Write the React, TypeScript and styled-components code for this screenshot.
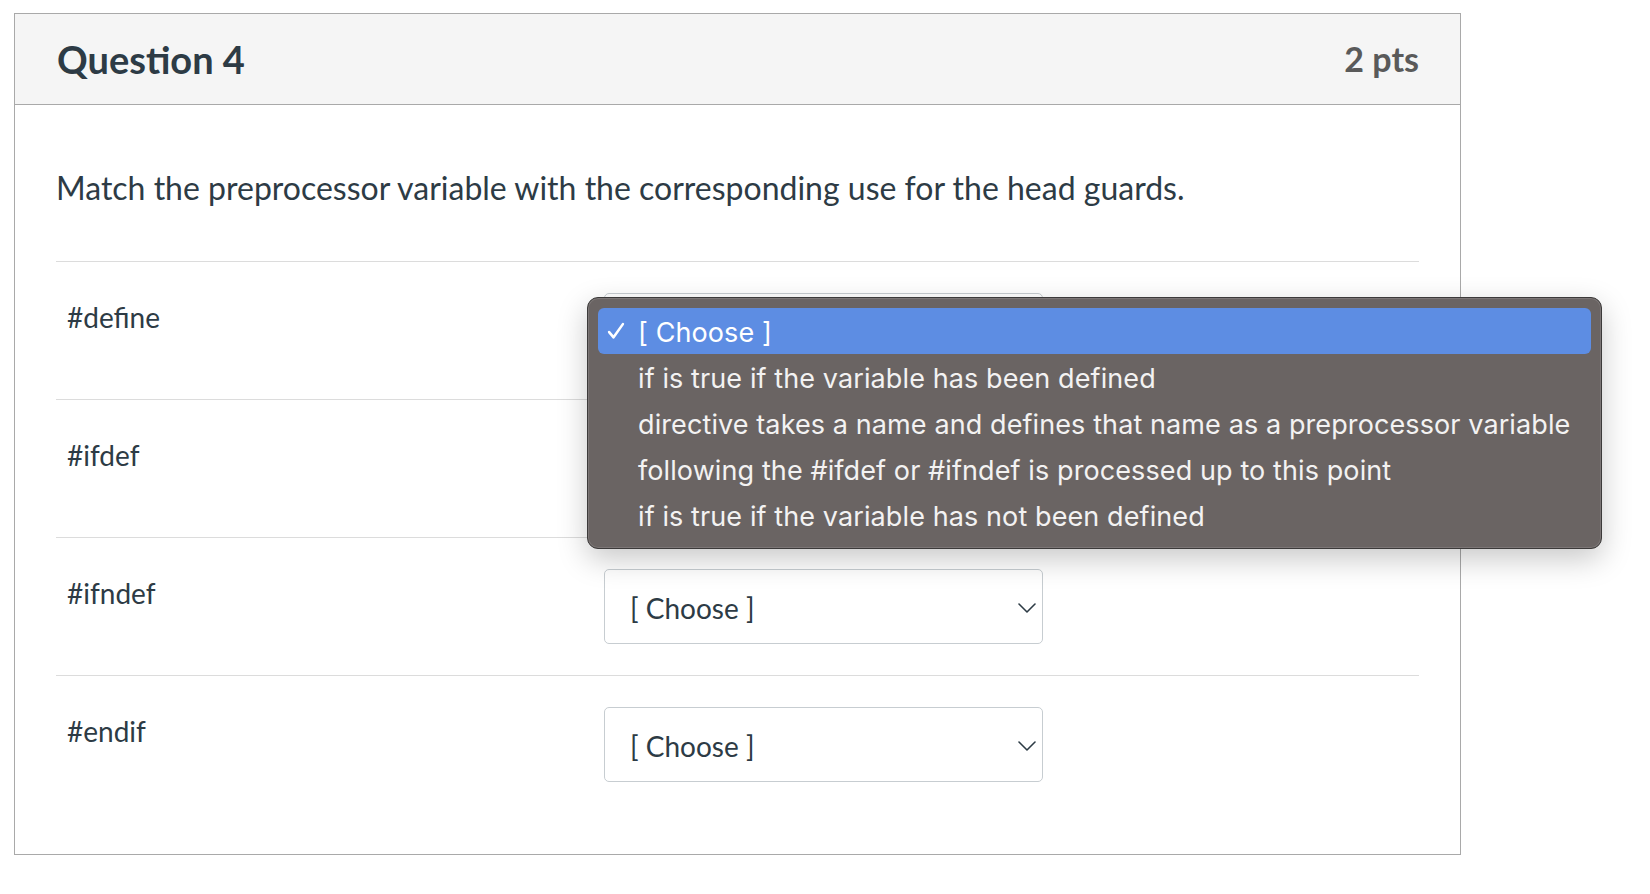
import React from 'react';
import styled, { createGlobalStyle } from 'styled-components';

const GlobalStyle = createGlobalStyle`
  html, body {
    margin: 0;
    padding: 0;
    background: #ffffff;
  }
  body {
    font-family: Lato, "Liberation Sans", sans-serif;
    color: #2d3b45;
  }
`;

const Page = styled.div`
  position: relative;
  padding: 13px 0 0 14px;
  width: 1650px;
  height: 894px;
  box-sizing: border-box;
`;

const Card = styled.div`
  width: 1447px;
  box-sizing: border-box;
  border: 1px solid #a9a9a9;
  background: #ffffff;
`;

const Header = styled.div`
  height: 91px;
  box-sizing: border-box;
  display: flex;
  align-items: center;
  justify-content: space-between;
  padding: 0 41px 0 42px;
  background: #f5f5f5;
  border-bottom: 1px solid #a9a9a9;
`;

const Title = styled.h2`
  margin: 0;
  font-size: 38px;
  line-height: 48px;
  font-weight: 700;
  color: #2d3b45;
`;

const Points = styled.div`
  font-size: 34px;
  line-height: 48px;
  font-weight: 700;
  color: #5a5a5a;
`;

const Body = styled.div`
  padding: 60px 41px 41px 41px;
`;

const Prompt = styled.p`
  margin: 0 0 50px;
  font-size: 32px;
  line-height: 46px;
  color: #2d3b45;
`;

const Row = styled.div`
  display: grid;
  grid-template-columns: 548px 439px;
  align-items: start;
  padding: 31px 0 31px;
  border-top: 1px solid #dcdcdc;
`;

const Label = styled.div`
  padding: 3px 0 0 11px;
  font-size: 28px;
  line-height: 42px;
  color: #2d3b45;
`;

const SelectBox = styled.div`
  height: 75px;
  box-sizing: border-box;
  display: flex;
  align-items: center;
  justify-content: space-between;
  padding: 2px 6px 0 25px;
  border: 1px solid #c7cdd1;
  border-radius: 5px;
  background: #ffffff;
  font-size: 28px;
  color: #2d3b45;
`;

const Menu = styled.div`
  position: absolute;
  left: 587px;
  top: 297px;
  width: 1015px;
  box-sizing: border-box;
  padding: 10px;
  background: #6a6463;
  border: 1px solid #3c3a3a;
  border-radius: 11px;
  box-shadow: 0 10px 30px rgba(0, 0, 0, 0.22), 0 0 0 1px rgba(255, 255, 255, 0.12) inset;
  font-family: Inter, "Noto Sans", sans-serif;
`;

const MenuItem = styled.div<{ $active?: boolean }>`
  position: relative;
  height: 46px;
  display: flex;
  align-items: center;
  padding: 2px 0 0 40px;
  box-sizing: border-box;
  border-radius: 6px;
  background: ${(p) => (p.$active ? '#5d8de3' : 'transparent')};
  color: ${(p) => (p.$active ? '#ffffff' : '#f3f2f2')};
  font-size: 27px;
  letter-spacing: 0.1px;
  white-space: nowrap;
`;

const Check = styled.svg`
  position: absolute;
  left: 9px;
  top: 14px;
`;

const Chevron = () => (
  <svg width="18" height="10" viewBox="0 0 18 10" fill="none">
    <path d="M1 1l8 8 8-8" stroke="#2d3b45" strokeWidth="1.6" strokeLinecap="round" strokeLinejoin="round" />
  </svg>
);

const pairs = ['#define', '#ifdef', '#ifndef', '#endif'];

const options = [
  '[ Choose ]',
  'if is true if the variable has been defined',
  'directive takes a name and defines that name as a preprocessor variable',
  'following the #ifdef or #ifndef is processed up to this point',
  'if is true if the variable has not been defined',
];

export default function App() {
  return (
    <>
      <GlobalStyle />
      <Page>
        <Card>
          <Header>
            <Title>Question 4</Title>
            <Points>2 pts</Points>
          </Header>
          <Body>
            <Prompt>Match the preprocessor variable with the corresponding use for the head guards.</Prompt>
            {pairs.map((p) => (
              <Row key={p}>
                <Label>{p}</Label>
                <SelectBox>
                  <span>[ Choose ]</span>
                  <Chevron />
                </SelectBox>
              </Row>
            ))}
          </Body>
        </Card>
        <Menu>
          {options.map((o, i) => (
            <MenuItem key={o} $active={i === 0}>
              {i === 0 && (
                <Check width="18" height="18" viewBox="0 0 17 17" fill="none">
                  <path d="M2 9.5l4.2 5L15 2" stroke="#ffffff" strokeWidth="2.4" strokeLinecap="round" strokeLinejoin="round" />
                </Check>
              )}
              {o}
            </MenuItem>
          ))}
        </Menu>
      </Page>
    </>
  );
}
